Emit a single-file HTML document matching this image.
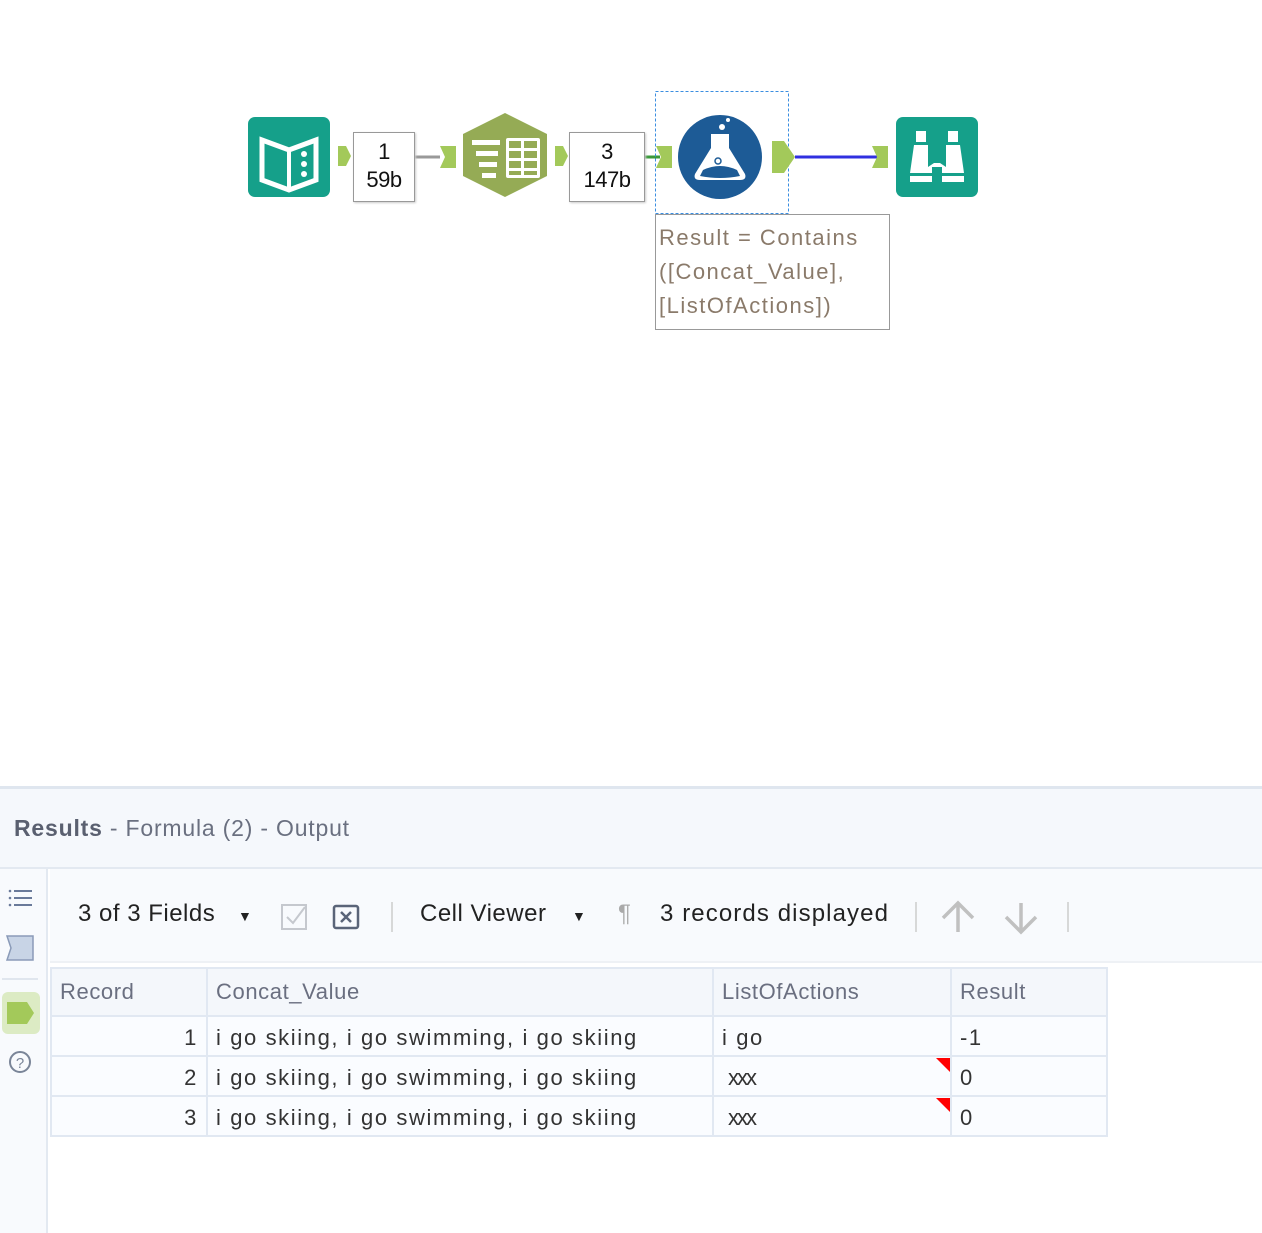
<!DOCTYPE html>
<html><head><meta charset="utf-8"><style>
*{margin:0;padding:0;box-sizing:border-box}
body{width:1262px;height:1233px;position:relative;background:#fff;font-family:"Liberation Sans",sans-serif;overflow:hidden}
.a{position:absolute}
.box{position:absolute;border:1.5px solid #999;background:#fff;text-align:center;font-size:22px;line-height:28px;color:#111;box-shadow:1px 1px 2px #ccc;letter-spacing:-0.5px}
.cell{position:absolute;background:#fafcff;border:2px solid #e1e8f2;font-size:22px;color:#333;line-height:42px;padding:0 8px;white-space:nowrap;letter-spacing:1.6px}
.hd{background:#f4f7fb;color:#6a6f80;line-height:46px;letter-spacing:0.6px}
.tb{position:absolute;font-size:24px;color:#222;top:900px;letter-spacing:0.5px}
</style></head><body>
<svg class="a" style="left:0;top:0" width="1262" height="400">
 <rect x="248" y="117" width="82" height="80" rx="7" fill="#15a08a"/>
 <path d="M262 140 L289 150 L316 140 L316 180 L289 190 L262 180 Z" fill="none" stroke="#fff" stroke-width="5"/>
 <line x1="289" y1="150" x2="289" y2="188" stroke="#fff" stroke-width="4"/>
 <circle cx="304" cy="154" r="3" fill="#fff"/><circle cx="304" cy="164" r="3" fill="#fff"/><circle cx="304" cy="174" r="3" fill="#fff"/>
 <path d="M338 146 h8 l5 10 l-5 10 h-8 z" fill="#a3c95a"/>
 <line x1="415" y1="157" x2="440" y2="157" stroke="#999" stroke-width="3"/>
 <path d="M440 146 h16 v22 h-16 l5 -11 z" fill="#a3c95a"/>
 <polygon points="505,113 547,134 547,176 505,197 463,176 463,134" fill="#95ab55"/>
 <g fill="#fff"><rect x="472" y="140" width="28" height="5"/><rect x="476" y="151" width="22" height="5"/><rect x="479" y="162" width="18" height="5"/><rect x="482" y="173" width="14" height="5"/>
 <rect x="506" y="138" width="34" height="40" rx="2"/></g>
 <g fill="#95ab55"><rect x="509" y="141" width="12" height="7"/><rect x="524" y="141" width="13" height="7"/><rect x="509" y="151" width="12" height="7"/><rect x="524" y="151" width="13" height="7"/><rect x="509" y="161" width="12" height="7"/><rect x="524" y="161" width="13" height="7"/><rect x="509" y="171" width="12" height="4"/><rect x="524" y="171" width="13" height="4"/></g>
 <path d="M555 146 h8 l5 10 l-5 10 h-8 z" fill="#a3c95a"/>
 <line x1="645" y1="157" x2="660" y2="157" stroke="#3a9a3a" stroke-width="3"/>
 <path d="M656 146 h16 v22 h-16 l5 -11 z" fill="#a3c95a"/>
 <rect x="655.5" y="91.5" width="133" height="122" fill="none" stroke="#3b8ee0" stroke-width="1" stroke-dasharray="3,2"/>
 <circle cx="720" cy="157" r="42" fill="#1d5b96"/>
 <path d="M711 134 v14 l-16 26 q-2 6 5 6 h40 q7 0 5 -6 l-16 -26 v-14 z" fill="#fff"/>
 <path d="M703 170 q17 -8 34 0 l3 6 q-20 4 -40 0 z" fill="#1d5b96"/>
 <circle cx="718" cy="161" r="3" fill="none" stroke="#1d5b96" stroke-width="1.5"/>
 <circle cx="722" cy="127" r="3" fill="#fff"/><circle cx="728" cy="120" r="2" fill="#fff"/>
 <path d="M772 141 h12 l11 16 l-11 16 h-12 z" fill="#a3c95a"/>
 <line x1="795" y1="157" x2="878" y2="157" stroke="#3030e0" stroke-width="3"/>
 <path d="M872 146 h16 v22 h-16 l5 -11 z" fill="#a3c95a"/>
 <rect x="896" y="117" width="82" height="80" rx="7" fill="#15a08a"/>
 <g fill="#fff">
  <rect x="916" y="131" width="10" height="11"/><rect x="948" y="131" width="10" height="11"/>
  <path d="M914 145 h14 v22 l6 -4 h6 l6 4 v-22 h14 l4 28 h-22 v-6 h-10 v6 h-22 z"/>
  <rect x="910" y="176" width="22" height="6"/><rect x="942" y="176" width="22" height="6"/>
 </g>
 <rect x="655.5" y="214.5" width="234" height="115" fill="#fff" stroke="#999"/>
</svg>
<div class="box" style="left:353px;top:132px;width:62px;height:70px;padding-top:5px">1<br>59b</div>
<div class="box" style="left:569px;top:132px;width:76px;height:70px;padding-top:5px">3<br>147b</div>
<div class="a" style="left:659px;top:221px;font-size:22px;line-height:34px;color:#8a7a6a;letter-spacing:1.5px">Result = Contains<br>([Concat_Value],<br>[ListOfActions])</div>

<div class="a" style="left:0;top:786px;width:1262px;height:3px;background:#dfe6ef"></div>
<div class="a" style="left:0;top:789px;width:1262px;height:80px;background:#f5f8fc;border-bottom:2px solid #e3e9f1"></div>
<div class="a" style="left:14px;top:815px;font-size:23px;color:#6a7080;letter-spacing:0.8px"><b style="color:#5a6070">Results</b> - Formula (2) - Output</div>
<div class="a" style="left:0;top:869px;width:48px;height:364px;background:#f8fafd;border-right:2px solid #e3e9f1"></div>
<div class="a" style="left:50px;top:869px;width:1212px;height:94px;background:#f8fafd;border-bottom:2px solid #eef1f5"></div>
<svg class="a" style="left:0;top:880px" width="48" height="200">
 <g stroke="#6a7a9a" stroke-width="2"><line x1="14" y1="11" x2="32" y2="11"/><line x1="14" y1="18" x2="32" y2="18"/><line x1="14" y1="25" x2="32" y2="25"/></g>
 <g fill="#6a7a9a"><circle cx="10" cy="11" r="1.3"/><circle cx="10" cy="18" r="1.3"/><circle cx="10" cy="25" r="1.3"/></g>
 <path d="M7 56 h26 v24 h-26 l4 -12 z" fill="#c8d4e6" stroke="#8a9ab8" stroke-width="1.5"/>
 <line x1="2" y1="99" x2="38" y2="99" stroke="#d8e0ea" stroke-width="1.5"/>
 <rect x="2" y="112" width="38" height="42" rx="6" fill="#dcebc4"/>
 <path d="M7 122 h20 l7 11 l-7 11 h-20 z" fill="#a3c95a"/>
 <circle cx="20" cy="182" r="10" fill="none" stroke="#7a8598" stroke-width="2"/>
 <text x="20" y="188" font-size="15" text-anchor="middle" fill="#7a8598" font-family="Liberation Sans">?</text>
</svg>
<div class="tb" style="left:78px">3 of 3 Fields</div>
<div class="tb" style="left:238px;font-size:14px;top:908px">▼</div>
<svg class="a" style="left:280px;top:900px" width="800" height="36">
 <rect x="2" y="5" width="24" height="24" fill="none" stroke="#c5c8ce" stroke-width="2"/><path d="M7 17 l6 6 l12 -16" fill="none" stroke="#c5c8ce" stroke-width="2"/>
 <rect x="54" y="6" width="24" height="22" rx="2" fill="none" stroke="#5a6478" stroke-width="2.5"/><path d="M61 12 l10 10 M71 12 l-10 10" stroke="#5a6478" stroke-width="2.5"/>
 <line x1="112" y1="2" x2="112" y2="32" stroke="#ccc" stroke-width="1.5"/>
 <line x1="636" y1="2" x2="636" y2="32" stroke="#ccc" stroke-width="1.5"/>
 <path d="M678 32 v-28 M663 18 l15 -15 l15 15" fill="none" stroke="#c0c0c0" stroke-width="3.5"/>
 <path d="M741 3 v28 M726 17 l15 15 l15 -15" fill="none" stroke="#c0c0c0" stroke-width="3.5"/>
 <line x1="788" y1="2" x2="788" y2="32" stroke="#ccc" stroke-width="1.5"/>
</svg>
<div class="tb" style="left:420px">Cell Viewer</div>
<div class="tb" style="left:572px;font-size:14px;top:908px">▼</div>
<div class="tb" style="left:618px;color:#aaa">¶</div>
<div class="tb" style="left:660px;letter-spacing:1.1px">3 records displayed</div>

<div class="cell hd" style="left:50px;top:967px;width:158px;height:50px">Record</div>
<div class="cell hd" style="left:206px;top:967px;width:508px;height:50px">Concat_Value</div>
<div class="cell hd" style="left:712px;top:967px;width:240px;height:50px">ListOfActions</div>
<div class="cell hd" style="left:950px;top:967px;width:158px;height:50px">Result</div>

<div class="cell" style="left:50px;top:1015px;width:158px;height:42px;text-align:right">1</div>
<div class="cell" style="left:206px;top:1015px;width:508px;height:42px">i go skiing, i go swimming, i go skiing</div>
<div class="cell" style="left:712px;top:1015px;width:240px;height:42px">i go</div>
<div class="cell" style="left:950px;top:1015px;width:158px;height:42px">-1</div>

<div class="cell" style="left:50px;top:1055px;width:158px;height:42px;text-align:right">2</div>
<div class="cell" style="left:206px;top:1055px;width:508px;height:42px">i go skiing, i go swimming, i go skiing</div>
<div class="cell" style="left:712px;top:1055px;width:240px;height:42px;padding-left:14px;letter-spacing:-2px">xxx</div>
<div class="cell" style="left:950px;top:1055px;width:158px;height:42px">0</div>

<div class="cell" style="left:50px;top:1095px;width:158px;height:42px;text-align:right">3</div>
<div class="cell" style="left:206px;top:1095px;width:508px;height:42px">i go skiing, i go swimming, i go skiing</div>
<div class="cell" style="left:712px;top:1095px;width:240px;height:42px;padding-left:14px;letter-spacing:-2px">xxx</div>
<div class="cell" style="left:950px;top:1095px;width:158px;height:42px">0</div>
<svg class="a" style="left:934px;top:1058px" width="16" height="80"><path d="M2 0 h14 v14 z M2 40 h14 v14 z" fill="#f00"/></svg>
</body></html>
